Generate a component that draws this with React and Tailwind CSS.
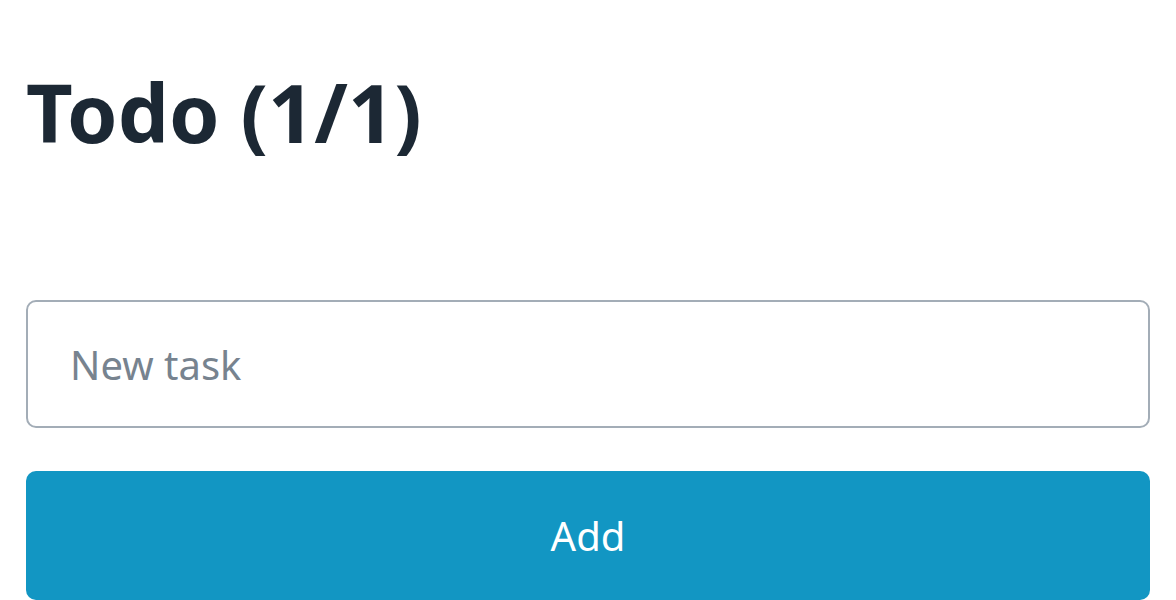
import React, { useState } from 'react'

export default function App() {
  const [task, setTask] = useState('')

  return (
    <div
      className="min-h-screen bg-white px-[26px] pt-[62px]"
      style={{ fontFamily: '"Noto Sans", "Open Sans", sans-serif' }}
    >
      <h1 className="text-[81px] leading-[100px] font-bold text-[#1c2834]">
        Todo (1/1)
      </h1>

      <form
        className="mt-[138px] flex flex-col gap-[43px]"
        onSubmit={(e) => {
          e.preventDefault()
          setTask('')
        }}
      >
        <input
          type="text"
          value={task}
          onChange={(e) => setTask(e.target.value)}
          placeholder="New task"
          className="h-[128px] w-full rounded-[10px] border-2 border-[#a3adb7] px-[42px] text-[40px] text-[#1c2834] outline-none placeholder:text-[#77838f]"
        />
        <button
          type="submit"
          className="h-[129px] w-full rounded-[10px] bg-[#1296c3] text-[40px] text-white"
        >
          Add
        </button>
      </form>
    </div>
  )
}
